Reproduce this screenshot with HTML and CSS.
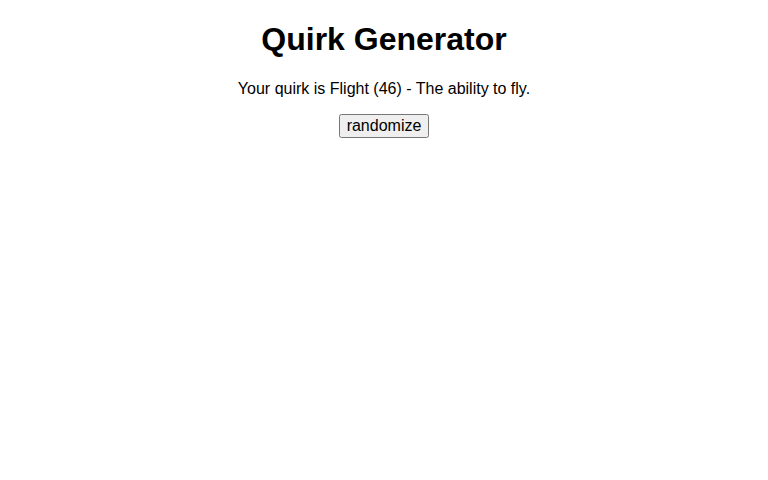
FILE: index.html
```html
<!DOCTYPE html>
<html lang="en">

<head>
    <meta charset="UTF-8">
    <meta name="viewport" content="width=device-width, initial-scale=1.0">
    <title>Quirk Generator</title>
    <link rel="stylesheet" href="styles.css">
</head>

<body>
    <div class="generator">
        <h1>Quirk Generator</h1>
        <p id="quirk">Your quirk is Flight (46) - The ability to fly.</p>
        <button class="randomize-btn" onclick="randomize()">randomize</button>
    </div>
</body>

</html>
```

FILE: styles.css
```css
body {
    margin: 0;
    font-family: "Liberation Sans", Arial, sans-serif;
}

.generator {
    text-align: center;
}

.randomize-btn {
    font-family: "Liberation Sans", Arial, sans-serif;
    font-size: 16px;
}
```
